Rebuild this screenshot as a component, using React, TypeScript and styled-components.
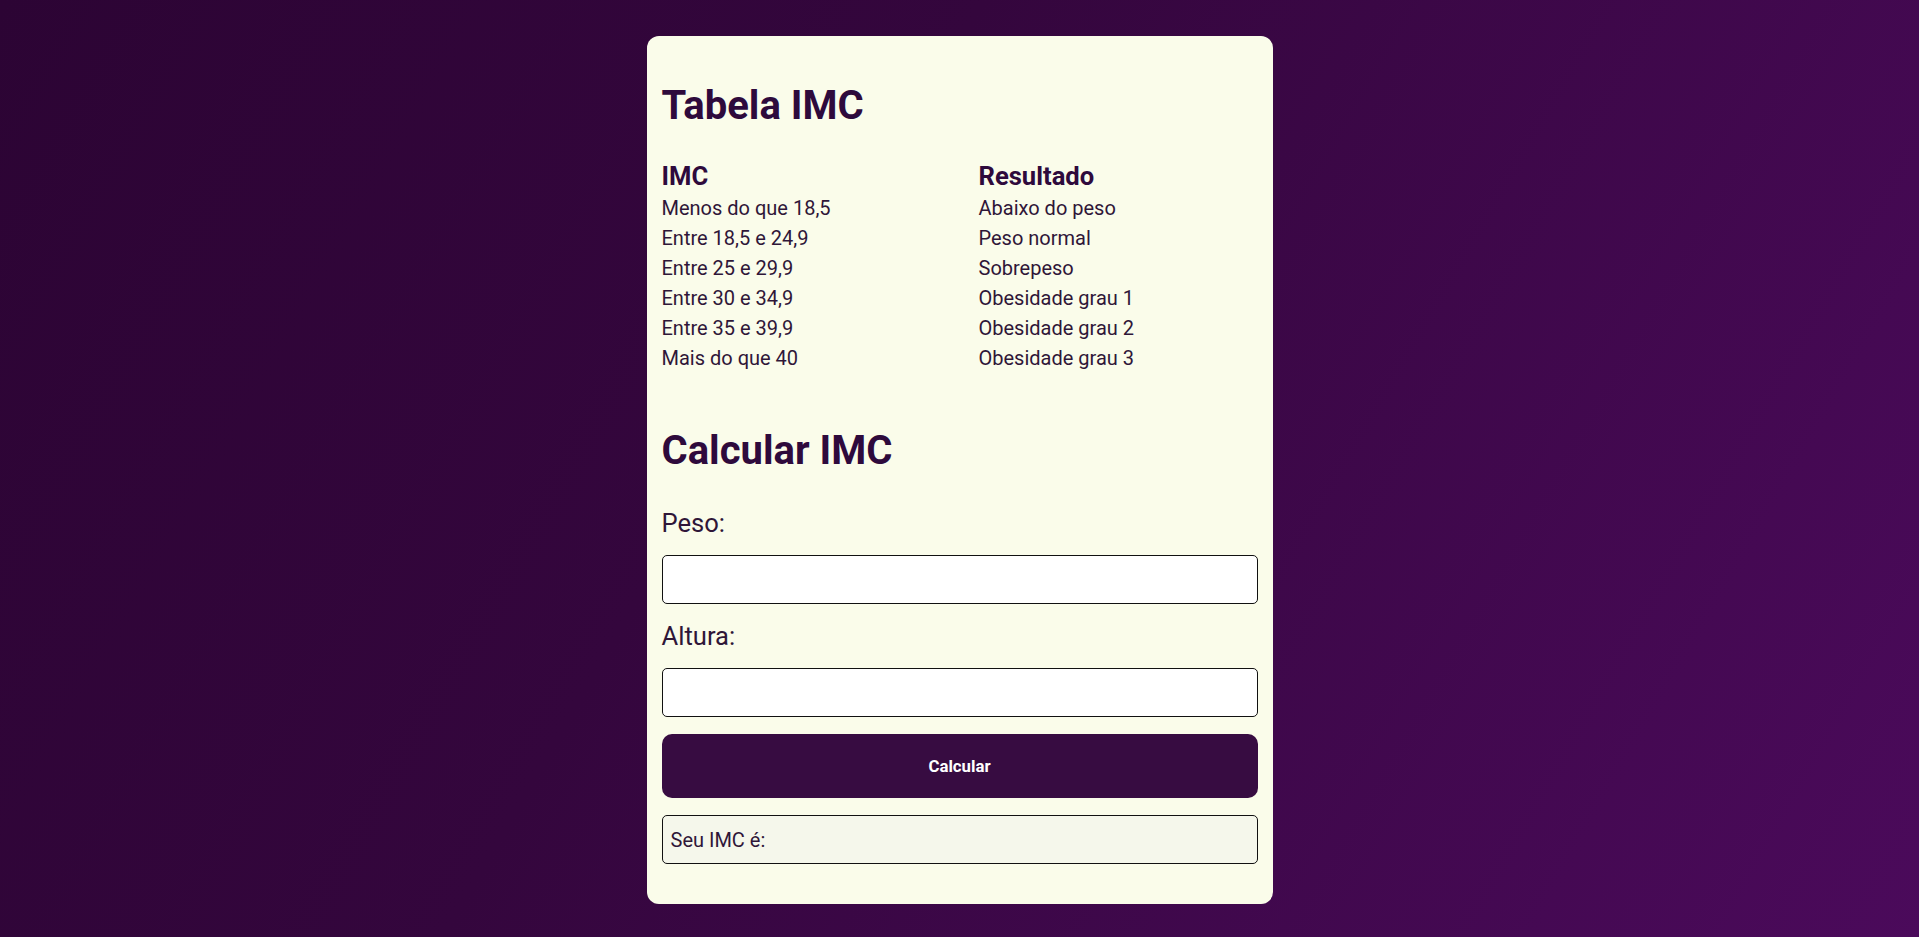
import React from "react";
import styled, { createGlobalStyle } from "styled-components";

const GlobalStyle = createGlobalStyle`
  * { box-sizing: border-box; }
  html, body { margin: 0; padding: 0; }
  body {
    font-family: Roboto, "Liberation Sans", Arial, sans-serif;
    color: #2e0f3a;
    background: #2d0535;
  }
`;

const Page = styled.main`
  min-height: 100vh;
  display: flex;
  justify-content: center;
  align-items: flex-start;
  padding-top: 36px;
  background: linear-gradient(120deg, #2c0434 0%, #34063d 40%, #4b0a5b 100%);
`;

const Card = styled.section`
  width: 626px;
  background: #fafcea;
  border-radius: 12px;
  padding: 46px 15px 40px;
  display: flex;
  flex-direction: column;
`;

const Title = styled.h1`
  margin: 0;
  font-size: 40px;
  line-height: 47px;
  font-weight: 700;
  color: #2e0a3c;
`;

const Table = styled.table`
  width: 100%;
  margin-top: 32px;
  border-collapse: collapse;
  border-spacing: 0;
  text-align: left;
`;

const Th = styled.th`
  padding: 0 0 2px;
  font-size: 25.6px;
  line-height: 30px;
  font-weight: 700;
  color: #2e0a3c;
  &:first-child { width: 317px; }
`;

const Td = styled.td`
  padding: 0;
  font-size: 20px;
  line-height: 30px;
  font-weight: 400;
  color: #2f1638;
`;

const SectionTitle = styled(Title)`
  margin-top: 54px;
`;

const Form = styled.form`
  margin-top: 34px;
  display: flex;
  flex-direction: column;
  gap: 17px;
`;

const Label = styled.label`
  display: block;
  font-size: 25.6px;
  line-height: 30px;
  font-weight: 400;
  color: #2f1638;
`;

const Input = styled.input`
  display: block;
  width: 100%;
  height: 49px;
  border: 1px solid #111;
  border-radius: 5px;
  background: #fff;
  font-family: inherit;
  font-size: 20px;
  padding: 0 8px;
  outline: none;
`;

const Button = styled.button`
  height: 64px;
  width: 100%;
  border: none;
  border-radius: 10px;
  background: #370c41;
  color: #fff;
  font-family: inherit;
  font-size: 16.8px;
  font-weight: 700;
  cursor: pointer;
`;

const Result = styled.div`
  height: 49px;
  border: 1px solid #111;
  border-radius: 5px;
  background: #f5f7eb;
  display: flex;
  align-items: center;
  padding: 0 8px;
  font-size: 20px;
  color: #2f1638;
`;

const rows: [string, string][] = [
  ["Menos do que 18,5", "Abaixo do peso"],
  ["Entre 18,5 e 24,9", "Peso normal"],
  ["Entre 25 e 29,9", "Sobrepeso"],
  ["Entre 30 e 34,9", "Obesidade grau 1"],
  ["Entre 35 e 39,9", "Obesidade grau 2"],
  ["Mais do que 40", "Obesidade grau 3"],
];

export default function App() {
  return (
    <>
      <GlobalStyle />
      <Page>
        <Card>
          <Title>Tabela IMC</Title>
          <Table>
            <thead>
              <tr>
                <Th>IMC</Th>
                <Th>Resultado</Th>
              </tr>
            </thead>
            <tbody>
              {rows.map(([imc, res]) => (
                <tr key={imc}>
                  <Td>{imc}</Td>
                  <Td>{res}</Td>
                </tr>
              ))}
            </tbody>
          </Table>
          <SectionTitle>Calcular IMC</SectionTitle>
          <Form onSubmit={(e) => e.preventDefault()}>
            <Label htmlFor="peso">Peso:</Label>
            <Input id="peso" type="text" />
            <Label htmlFor="altura">Altura:</Label>
            <Input id="altura" type="text" />
            <Button type="submit">Calcular</Button>
            <Result>Seu IMC é:</Result>
          </Form>
        </Card>
      </Page>
    </>
  );
}
